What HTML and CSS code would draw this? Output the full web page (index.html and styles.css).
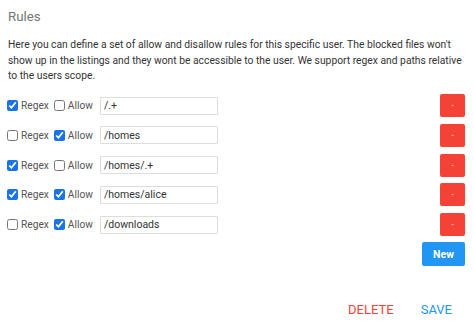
FILE: index.html
```html
<!DOCTYPE html>
<html>
<head>
<meta charset="utf-8">
<link rel="stylesheet" href="styles.css">
</head>
<body>
<div class="card">
  <h3 class="title">Rules</h3>
  <p class="desc">Here you can define a set of allow and disallow rules for this specific user. The blocked files won't show up in the listings and they wont be accessible to the user. We support regex and paths relative to the users scope.</p>
  <div class="rules">
    <div class="rule">
      <label class="chk"><input type="checkbox" checked> Regex</label>
      <label class="chk"><input type="checkbox"> Allow</label>
      <input class="path" type="text" value="/.+">
      <button class="remove">-</button>
    </div>
    <div class="rule">
      <label class="chk"><input type="checkbox"> Regex</label>
      <label class="chk"><input type="checkbox" checked> Allow</label>
      <input class="path" type="text" value="/homes">
      <button class="remove">-</button>
    </div>
    <div class="rule">
      <label class="chk"><input type="checkbox" checked> Regex</label>
      <label class="chk"><input type="checkbox"> Allow</label>
      <input class="path" type="text" value="/homes/.+">
      <button class="remove">-</button>
    </div>
    <div class="rule">
      <label class="chk"><input type="checkbox" checked> Regex</label>
      <label class="chk"><input type="checkbox" checked> Allow</label>
      <input class="path" type="text" value="/homes/alice">
      <button class="remove">-</button>
    </div>
    <div class="rule">
      <label class="chk"><input type="checkbox"> Regex</label>
      <label class="chk"><input type="checkbox" checked> Allow</label>
      <input class="path" type="text" value="/downloads">
      <button class="remove">-</button>
    </div>
  </div>
  <div class="new-row"><button class="new">New</button></div>
  <div class="actions">
    <button class="flat red">DELETE</button>
    <button class="flat blue">SAVE</button>
  </div>
</div>
</body>
</html>
```

FILE: styles.css
```css
html, body {
  margin: 0;
  padding: 0;
  background: #fff;
  font-family: Roboto, "Liberation Sans", sans-serif;
}
.card {
  padding: 9px 9px 0 8px;
}
.title {
  margin: 0;
  font-size: 13.3px;
  line-height: 16px;
  font-weight: 400;
  color: #757575;
}
.desc {
  margin: 12px 0 0 0;
  font-size: 10.3px;
  line-height: 15.7px;
  color: #333;
}
.rules {
  margin-top: 10px;
  display: flex;
  flex-direction: column;
  gap: 6.75px;
}
.rule {
  display: flex;
  align-items: center;
  height: 23px;
}
.chk {
  display: flex;
  align-items: center;
  font-size: 10.2px;
  color: #555;
  margin-right: 6px;
}
.chk input {
  width: 11px;
  height: 11px;
  margin: 0 3px 0 -1px;
  accent-color: #1a73e8;
}
.path {
  margin-left: 1px;
  width: 118px;
  height: 18px;
  box-sizing: border-box;
  border: 1px solid #ddd;
  border-radius: 1px;
  padding: 0 3px;
  font-family: Roboto, "Liberation Sans", sans-serif;
  font-size: 10.5px;
  color: #333;
  outline: none;
}
.remove {
  margin-left: auto;
  width: 25px;
  height: 23px;
  border: none;
  border-radius: 2px;
  background: #f44336;
  color: #fff;
  font-size: 8px;
  padding: 0;
  font-family: Roboto, sans-serif;
}
.new-row {
  display: flex;
  justify-content: flex-end;
  margin-top: 6px;
}
.new {
  width: 43px;
  height: 24px;
  border: none;
  border-radius: 2px;
  background: #2196f3;
  color: #fff;
  font-family: Roboto, sans-serif;
  font-size: 10.5px;
  font-weight: 700;
  padding: 0;
}
.actions {
  display: flex;
  justify-content: flex-end;
  gap: 27px;
  margin-top: 36px;
  padding-right: 13px;
}
.flat {
  border: none;
  background: none;
  padding: 0;
  font-family: Roboto, sans-serif;
  font-size: 13px;
  line-height: 16px;
  font-weight: 400;
}
.red { color: #f44336; }
.blue { color: #2196f3; }
```
